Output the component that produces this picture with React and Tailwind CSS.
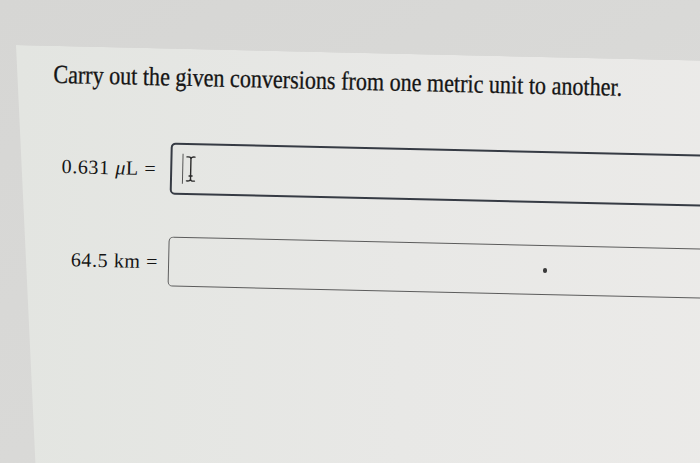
export default function App() {
  return (
    <div className="w-[700px] h-[463px] overflow-hidden bg-gradient-to-br from-[#d6d6d4] via-[#d9d9d7] to-[#dedddb] font-['Liberation_Serif',serif] text-[#151515]">
      <div className="ml-[16px] mt-[45px] w-[780px] h-[520px] origin-top-left rotate-[1.3deg] bg-gradient-to-r from-[#e3e5e1] via-[#e8e8e6] to-[#ecebe9] pt-[14px] [clip-path:polygon(0_0,100%_0,100%_100%,36px_100%)]">
        <h1 className="ml-[38px] text-[26px] leading-[30px] whitespace-nowrap origin-left scale-x-[0.85] [-webkit-text-stroke:0.3px_#151515]">
          Carry out the given conversions from one metric unit to another.
        </h1>

        <div className="mt-[50px] flex flex-col gap-[42px]">
          <div className="flex items-center gap-[14px]">
            <div className="w-[143px] text-right text-[20px] tracking-[0.6px] whitespace-nowrap">
              0.631 <span className="italic">μ</span>L&nbsp;=
            </div>
            <div className="flex-1 h-[52px] rounded-[5px] border-2 border-[#363b44] flex items-center pl-[10px] gap-[1px]">
              <div className="w-px h-[30px] bg-[#555]" />
              <svg width="13" height="28" viewBox="0 0 12 28" fill="none" stroke="#2a2a2a" strokeWidth="1.4" strokeLinecap="round">
                <path d="M6 4 V24" />
                <path d="M2 2 Q6 1.5 6 4 Q6 1.5 10 2" />
                <path d="M2 26 Q6 26.5 6 24 Q6 26.5 10 26" />
                <path d="M4.5 21 H7.5" />
              </svg>
            </div>
          </div>

          <div className="flex items-center gap-[10px]">
            <div className="w-[147px] text-right text-[20px] tracking-[0.6px] whitespace-nowrap">
              64.5 km&nbsp;=
            </div>
            <div className="relative flex-1 h-[50px] rounded-[5px] border-[1.5px] border-[#5c5c5c]">
              <div className="absolute left-[374px] top-[22px] w-[4px] h-[5px] rounded-full bg-[#3a3a3a]" />
            </div>
          </div>
        </div>
      </div>
    </div>
  );
}
